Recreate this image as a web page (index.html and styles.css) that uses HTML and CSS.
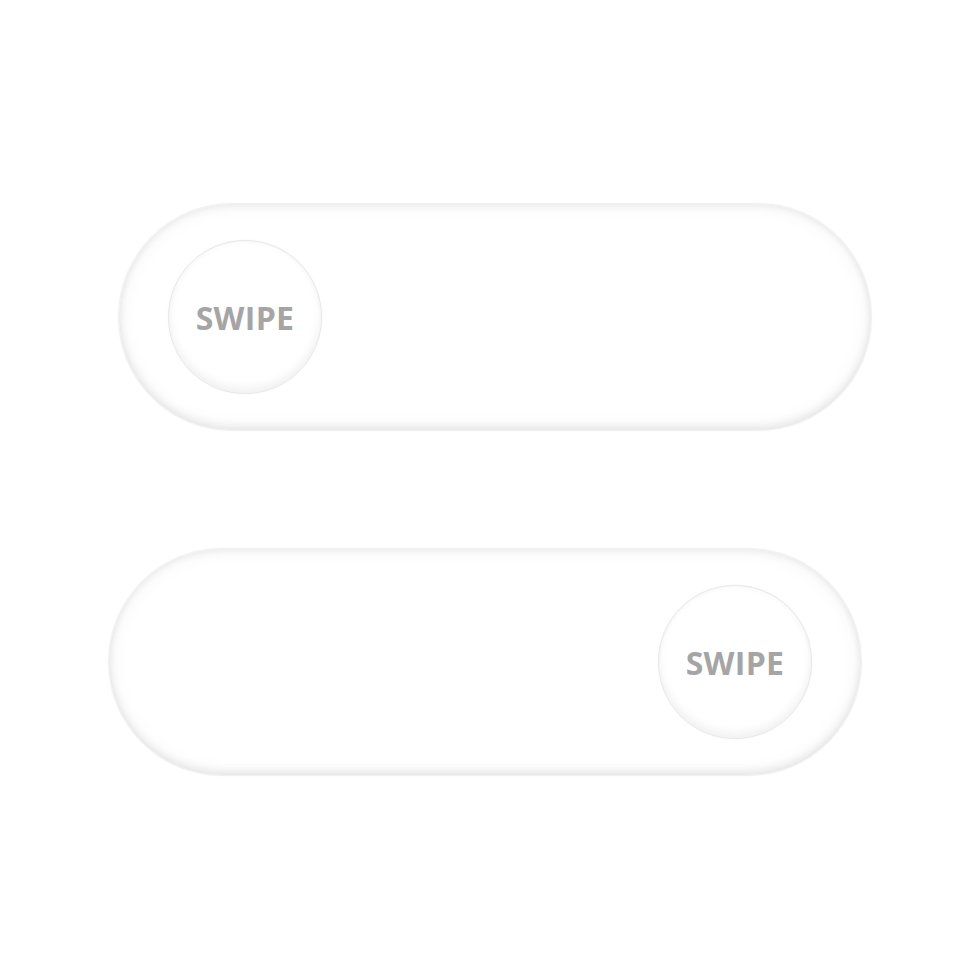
FILE: index.html
```
<!DOCTYPE html>
<html lang="en">
<head>
  <meta charset="UTF-8">
  <meta name="viewport" content="width=device-width, initial-scale=1.0">
  <title>Swipe</title>
  <link rel="stylesheet" href="styles.css">
</head>
<body>
  <main class="board">
    <div class="track track-off">
      <div class="knob">SWIPE</div>
    </div>

    <div class="track track-on">
      <div class="knob">SWIPE</div>
    </div>
  </main>
</body>
</html>
```

FILE: styles.css
```
* {
  box-sizing: border-box;
  margin: 0;
  padding: 0;
  font-family: 'Open Sans', 'Liberation Sans', sans-serif;
}

body {
  background-color: #ffffff;
  width: 980px;
  height: 980px;
}

.board {
  display: flex;
  flex-direction: column;
  gap: 117px;
  padding-top: 203px;
}

/* pista con relieve hundido */
.track {
  width: 754px;
  height: 228px;
  border-radius: 114px;
  background-color: #ffffff;
  border: 1px solid #f1f1f1;
  display: flex;
  align-items: center;
  padding: 0 49px;
  box-shadow:
    0 0 2px rgba(0, 0, 0, 0.03),
    inset 0 3px 7px rgba(0, 0, 0, 0.045),
    inset 0 -4px 9px rgba(0, 0, 0, 0.075),
    inset 0 0 22px rgba(0, 0, 0, 0.05);
}

.track-off {
  margin-left: 118px;
  justify-content: flex-start;
}

.track-on {
  margin-left: 108px;
  justify-content: flex-end;
}

.knob {
  width: 154px;
  height: 154px;
  border-radius: 50%;
  background-color: #ffffff;
  border: 1px solid #e8e8e8;
  display: flex;
  align-items: center;
  justify-content: center;
  color: #a5a5a5;
  font-size: 32px;
  font-weight: 700;
  letter-spacing: 0.3px;
  box-shadow:
    inset 0 -5px 10px rgba(0, 0, 0, 0.06),
    inset 0 2px 5px rgba(0, 0, 0, 0.02),
    0 0 2px rgba(0, 0, 0, 0.05);
}
```
